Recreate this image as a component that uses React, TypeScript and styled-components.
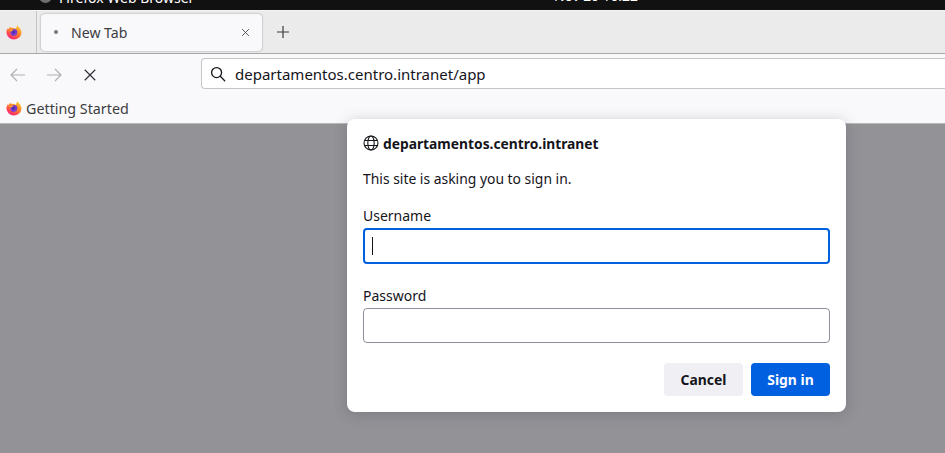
import { createGlobalStyle } from "styled-components";
import styled from "styled-components";
import { useId } from "react";

const Global = createGlobalStyle`
  html, body {
    margin: 0;
    padding: 0;
    height: 100%;
    overflow: hidden;
  }
  body {
    font-family: "Noto Sans", "Open Sans", sans-serif;
    color: #15141a;
  }
`;

const Page = styled.div`
  position: relative;
  width: 945px;
  height: 453px;
  display: flex;
  flex-direction: column;
  overflow: hidden;
  background: #939297;
`;

const SystemBar = styled.div`
  height: 10px;
  background: #111111;
  border-bottom: 1px solid #f4f4f4;
  flex: none;
  display: flex;
  align-items: flex-end;
  overflow: hidden;
  color: #ffffff;
  line-height: 19px;
  white-space: nowrap;
`;

const SystemDot = styled.span`
  width: 13px;
  height: 13px;
  margin: 0 7px 7px 39px;
  border-radius: 50%;
  background: #6e6e6e;
  flex: none;
`;

const SystemTitle = styled.span`
  width: 495px;
  flex: none;
  margin-bottom: 3px;
  font-size: 14px;
`;

const SystemClock = styled.span`
  margin-bottom: 5px;
  font-size: 13.8px;
`;

const TabBar = styled.div`
  height: 42px;
  flex: none;
  display: flex;
  align-items: center;
  background: #ebebeb;
  border-bottom: 1px solid #a8a8a8;
`;

const AppMenu = styled.div`
  width: 37px;
  height: 100%;
  flex: none;
  display: flex;
  align-items: center;
  box-sizing: border-box;
  padding-left: 6px;
  border-right: 1px solid #c4c4c4;
`;

const Tab = styled.div`
  width: 221px;
  height: 37px;
  margin-left: 4px;
  flex: none;
  box-sizing: border-box;
  padding: 0 12px 0 13px;
  display: flex;
  align-items: center;
  background: #f9f9fb;
  border-radius: 4px;
  box-shadow: 0 0 2px rgba(0, 0, 0, 0.4);
`;

const TabDot = styled.span`
  width: 4px;
  height: 4px;
  border-radius: 50%;
  background: #77777a;
  flex: none;
  margin-right: 13px;
`;

const TabTitle = styled.span`
  flex: 1;
  font-size: 14.1px;
  color: #3d3d42;
`;

const NewTab = styled.div`
  margin-left: 15px;
  display: flex;
  align-items: center;
`;

const NavBar = styled.div`
  height: 41px;
  flex: none;
  display: flex;
  align-items: center;
  background: #f9f9fb;
  box-sizing: border-box;
  padding-left: 9px;
`;

const NavIcon = styled.span`
  width: 18px;
  height: 18px;
  flex: none;
  display: flex;
  align-items: center;
  justify-content: center;
  margin-right: 18px;
`;

const UrlBox = styled.div`
  margin: 0 0 2px 84px;
  flex: 1;
  height: 31px;
  box-sizing: border-box;
  border: 1px solid #c6c6c8;
  border-right: none;
  border-radius: 4px 0 0 4px;
  background: #ffffff;
  display: flex;
  align-items: center;
  padding-left: 8px;
`;

const UrlText = styled.span`
  margin-left: 9px;
  font-size: 15px;
  color: #15141a;
`;

const BookmarkBar = styled.div`
  height: 29px;
  flex: none;
  box-sizing: border-box;
  display: flex;
  align-items: center;
  padding: 0 0 2px 6px;
  gap: 4px;
  background: #f9f9fb;
  border-bottom: 1px solid #b8b8b8;
  font-size: 14.3px;
  color: #3d3d42;
`;

const Dialog = styled.form`
  position: absolute;
  left: 347px;
  top: 119px;
  width: 499px;
  height: 293px;
  box-sizing: border-box;
  padding: 16px;
  display: flex;
  flex-direction: column;
  background: #ffffff;
  border-radius: 8px;
  box-shadow: 0 2px 14px rgba(58, 57, 68, 0.25);
`;

const Host = styled.div`
  display: flex;
  align-items: center;
  gap: 4px;
  height: 16px;
  font-size: 13.8px;
  font-weight: 700;
  color: #15141a;
`;

const Prompt = styled.p`
  margin: 19px 0 0;
  font-size: 13.9px;
  line-height: 18px;
`;

const FieldLabel = styled.label`
  display: block;
  margin-top: 19px;
  font-size: 14px;
  line-height: 18px;
`;

const Input = styled.div<{ $focused?: boolean }>`
  margin-top: 3px;
  box-sizing: border-box;
  height: 36px;
  background: #ffffff;
  border-radius: 4px;
  border: ${(p) => (p.$focused ? "2px solid #0060df" : "1px solid #8f8f9d")};
  display: flex;
  align-items: center;
  padding-left: 7px;
`;

const Caret = styled.span`
  width: 1px;
  height: 18px;
  background: #15141a;
`;

const PasswordLabel = styled(FieldLabel)`
  margin-top: 23px;
`;

const Actions = styled.div`
  margin-top: 20px;
  display: flex;
  justify-content: flex-end;
  gap: 8px;
`;

const Button = styled.button<{ $primary?: boolean }>`
  width: 79px;
  height: 33px;
  border: none;
  border-radius: 4px;
  padding: 0;
  font-family: inherit;
  font-size: 13.9px;
  font-weight: 700;
  background: ${(p) => (p.$primary ? "#0060df" : "#f0f0f4")};
  color: ${(p) => (p.$primary ? "#fbfbfe" : "#15141a")};
`;

function FirefoxLogo() {
  const id = useId();
  return (
    <svg width="16" height="16" viewBox="0 0 16 16" style={{ flex: "none" }}>
      <defs>
        <linearGradient id={id} x1="0.8" y1="0" x2="0.25" y2="1">
          <stop offset="0" stopColor="#ffd53d" />
          <stop offset="0.45" stopColor="#ff8a24" />
          <stop offset="0.8" stopColor="#ff3d5c" />
          <stop offset="1" stopColor="#f0227e" />
        </linearGradient>
      </defs>
      <path
        d="M11.2.4c.1 1.5 1.2 2 2.3 3.3 1.3 1.5 2.1 3.5 2 5.3A7.6 7.6 0 0 1 .4 8.6c0-1.7.4-3.1 1.2-4.4.1.6.3 1 .6 1.3.6-1.3 1.6-2.2 2.8-2.7-.2.6-.2 1 0 1.3 1.4-.5 3.2-.2 4.4.7.9-1 1.6-2.3 1.8-4.4z"
        fill={`url(#${id})`}
      />
      <circle cx="8" cy="8.6" r="3.5" fill="#7a3bd0" />
      <circle cx="7.4" cy="8" r="1.7" fill="#4b2fb0" />
      <path d="M3.4 6.6c1.4-1.2 3.4-1.3 4.9-.4-1.7 0-2.8.6-3.1 1.6z" fill="#ffa22e" />
      <path d="M11.6 7.2c.3 2.5-1.3 4.4-3.7 4.6 1.4.4 3.4-.2 4.3-2 .4-.9.1-2-.6-2.6z" fill="#ff8a24" />
    </svg>
  );
}

function GlobeIcon() {
  return (
    <svg width="16" height="16" viewBox="0 0 16 16" fill="none" stroke="#15141a" strokeWidth="1.1">
      <circle cx="8" cy="8" r="7" />
      <ellipse cx="8" cy="8" rx="3.2" ry="7" />
      <path d="M1.5 5.5h13M1.5 10.5h13" />
    </svg>
  );
}

function SearchIcon() {
  return (
    <svg width="16" height="16" viewBox="0 0 16 16" fill="none" stroke="#15141a" strokeWidth="1.3" strokeLinecap="round">
      <circle cx="6.6" cy="6.6" r="5" />
      <path d="M10.3 10.3l4.4 4.4" />
    </svg>
  );
}

function ArrowIcon({ flip }: { flip?: boolean }) {
  return (
    <svg
      width="18"
      height="18"
      viewBox="0 0 18 18"
      fill="none"
      stroke="#b0b0b4"
      strokeWidth="1.2"
      style={flip ? { transform: "scaleX(-1)" } : undefined}
    >
      <path d="M2 9h14M8 3L2 9l6 6" />
    </svg>
  );
}

function CrossIcon({ size, color }: { size: number; color: string }) {
  return (
    <svg width={size} height={size} viewBox="0 0 16 16" fill="none" stroke={color} strokeWidth={size < 12 ? 1.6 : 1.3}>
      <path d="M2 2l12 12M14 2L2 14" />
    </svg>
  );
}

function PlusIcon() {
  return (
    <svg width="12" height="12" viewBox="0 0 12 12" fill="none" stroke="#3d3d42" strokeWidth="1.2">
      <path d="M6 0v12M0 6h12" />
    </svg>
  );
}

export default function App() {
  return (
    <Page>
      <Global />
      <SystemBar>
        <SystemDot />
        <SystemTitle>Firefox Web Browser</SystemTitle>
        <SystemClock>Nov 20 10:22</SystemClock>
      </SystemBar>
      <TabBar>
        <AppMenu>
          <FirefoxLogo />
        </AppMenu>
        <Tab>
          <TabDot />
          <TabTitle>New Tab</TabTitle>
          <CrossIcon size={9} color="#4a4a4f" />
        </Tab>
        <NewTab>
          <PlusIcon />
        </NewTab>
      </TabBar>
      <NavBar>
        <NavIcon>
          <ArrowIcon />
        </NavIcon>
        <NavIcon>
          <ArrowIcon flip />
        </NavIcon>
        <NavIcon>
          <CrossIcon size={14} color="#2b2a33" />
        </NavIcon>
        <UrlBox>
          <SearchIcon />
          <UrlText>departamentos.centro.intranet/app</UrlText>
        </UrlBox>
      </NavBar>
      <BookmarkBar>
        <FirefoxLogo />
        Getting Started
      </BookmarkBar>
      <Dialog>
        <Host>
          <GlobeIcon />
          departamentos.centro.intranet
        </Host>
        <Prompt>This site is asking you to sign in.</Prompt>
        <FieldLabel>Username</FieldLabel>
        <Input $focused>
          <Caret />
        </Input>
        <PasswordLabel>Password</PasswordLabel>
        <Input />
        <Actions>
          <Button type="button">Cancel</Button>
          <Button type="button" $primary>
            Sign in
          </Button>
        </Actions>
      </Dialog>
    </Page>
  );
}
